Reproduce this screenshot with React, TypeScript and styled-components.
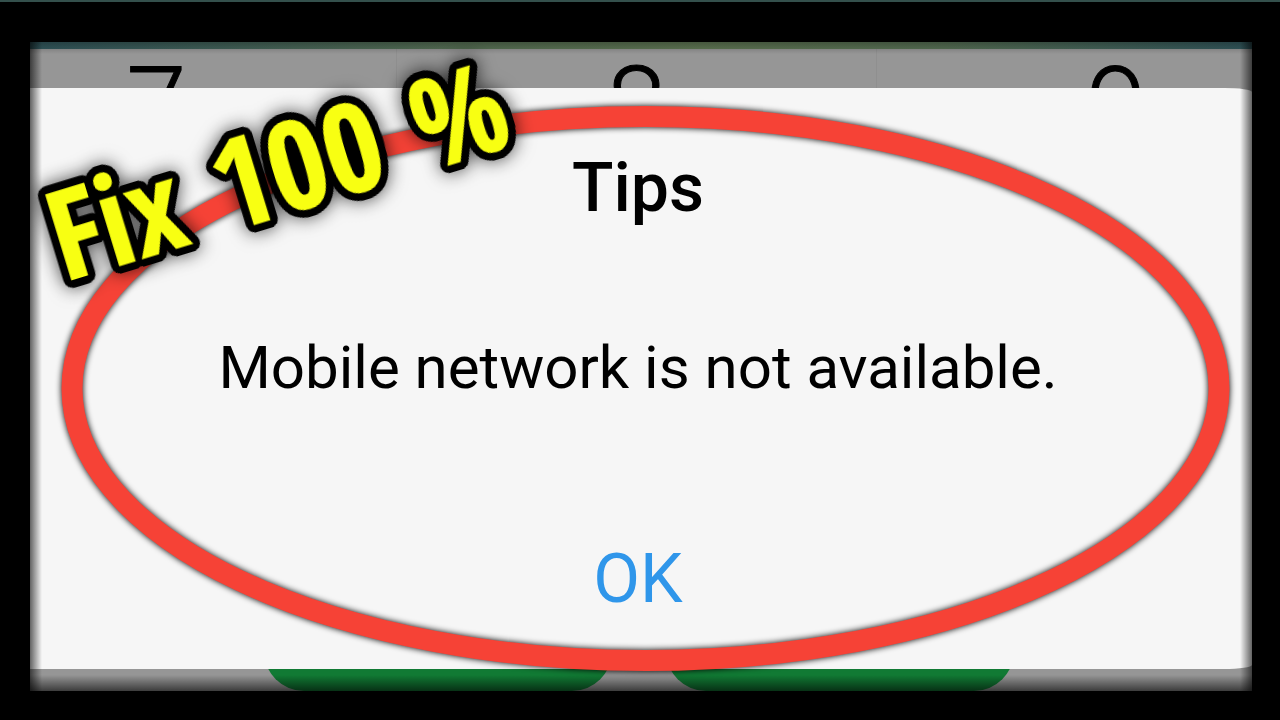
import React from "react";
import styled, { createGlobalStyle } from "styled-components";

const GlobalStyle = createGlobalStyle`
  *, *::before, *::after { box-sizing: border-box; }
  body { margin: 0; background: #000; font-family: Roboto, "Liberation Sans", sans-serif; }
`;

const OUTLINE = 8;

/* A ring of hard shadows gives the lettering an outline with rounded corners. */
const ring = (radius: number, count: number) =>
  Array.from({ length: count }, (_, i) => {
    const angle = (i / count) * 2 * Math.PI;
    return `${(Math.cos(angle) * radius).toFixed(2)}px ${(Math.sin(angle) * radius).toFixed(2)}px 0 #000`;
  });

const roundedOutline = [...ring(OUTLINE, 48), ...ring(OUTLINE / 2, 12)].join(", ");

const Frame = styled.main`
  position: relative;
  display: flex;
  min-height: 100vh;
  padding: 40px 28px 29px 30px;
  background: #000;
  border-top: 2px solid #34504c;
  overflow: hidden;
`;

const Screen = styled.div`
  position: relative;
  flex: 1;
  min-width: 0;
  display: flex;
  flex-direction: column;
  background: #969696;
  overflow: hidden;

  &::after {
    content: "";
    position: absolute;
    inset: 0;
    pointer-events: none;
    background:
      linear-gradient(90deg, rgba(0, 0, 0, 0.6), transparent 12px),
      linear-gradient(270deg, rgba(0, 0, 0, 0.6), transparent 12px),
      linear-gradient(0deg, rgba(0, 0, 0, 0.6), transparent 16px),
      linear-gradient(180deg, rgba(0, 0, 0, 0.3), transparent 12px);
  }
`;

const StatusStrip = styled.div`
  height: 7px;
  background: linear-gradient(90deg, #335a60, #5a7458 35%, #647c58 55%, #5a7458 75%, #335a60);
`;

const Keypad = styled.div`
  height: 39px;
  padding-right: 8px;
  display: grid;
  grid-template-columns: repeat(3, 480px);
  justify-content: center;
  overflow: hidden;
`;

const Key = styled.div`
  padding-top: 6px;
  text-align: center;
  font-size: 108px;
  line-height: 102px;
  font-weight: 300;
  color: #000;
  -webkit-text-stroke: 1px #000;
  border-right: 1px solid #8f8f8f;
`;

const Dialog = styled.section`
  flex: 1;
  display: flex;
  flex-direction: column;
  align-items: center;
  justify-content: space-between;
  padding: 60px 6px 50px 0;
  background: #f6f6f6;
  border-radius: 0 28px 28px 0 / 0 4px 4px 0;
  color: #000;
`;

const Title = styled.h1`
  margin: 0;
  font-size: 68px;
  line-height: 80px;
  font-weight: 500;
`;

const Message = styled.p`
  margin: 0;
  padding-bottom: 32px;
  font-size: 60px;
  line-height: 80px;
  white-space: nowrap;
`;

const OkButton = styled.button`
  padding: 0;
  border: 0;
  background: none;
  font: 400 68px/80px Roboto, "Liberation Sans", sans-serif;
  color: #2f96ea;
  cursor: pointer;
`;

const CallRow = styled.div`
  height: 22px;
  padding-right: 4px;
  display: flex;
  justify-content: center;
  align-items: flex-end;
  gap: 54px;
  overflow: hidden;
`;

const CallButton = styled.button`
  flex: none;
  width: 348px;
  height: 90px;
  padding: 0;
  border: 0;
  border-radius: 40px;
  background: #117a34;
`;

const Ring = styled.svg`
  position: absolute;
  inset: 0;
  width: 100%;
  height: 100%;
  pointer-events: none;
  filter: drop-shadow(0 0 3px #000);
`;

const Banner = styled.div`
  position: absolute;
  left: 68px;
  top: 172px;
  display: flex;
  gap: 36px;
  transform: rotate(-17deg);
  transform-origin: 0 100%;
  font-family: "Open Sans Condensed", "Roboto Condensed", Roboto, sans-serif;
  font-size: 124px;
  line-height: 120px;
  font-weight: 700;
  white-space: nowrap;
  color: #f8ff12;
  -webkit-text-stroke: 1px #f8ff12;
  text-shadow: ${roundedOutline};
  filter: drop-shadow(0 0 9px rgba(0, 0, 0, 0.7));
`;

export default function App() {
  return (
    <>
      <GlobalStyle />
      <Frame>
        <Screen>
          <StatusStrip />
          <Keypad>
            <Key>7</Key>
            <Key>8</Key>
            <Key>9</Key>
          </Keypad>
          <Dialog role="dialog" aria-labelledby="tips-title">
            <Title id="tips-title">Tips</Title>
            <Message>Mobile network is not available.</Message>
            <OkButton type="button">OK</OkButton>
          </Dialog>
          <CallRow>
            <CallButton type="button" aria-label="Call with SIM 1" />
            <CallButton type="button" aria-label="Call with SIM 2" />
          </CallRow>
          <Ring viewBox="0 0 1222 649" preserveAspectRatio="none" aria-hidden="true">
            <ellipse cx="615.5" cy="346.5" rx="573.5" ry="272" fill="none" stroke="#f64236" strokeWidth="21" />
          </Ring>
        </Screen>
        <Banner>
          <span>Fix</span>
          <span>100</span>
          <span>%</span>
        </Banner>
      </Frame>
    </>
  );
}
